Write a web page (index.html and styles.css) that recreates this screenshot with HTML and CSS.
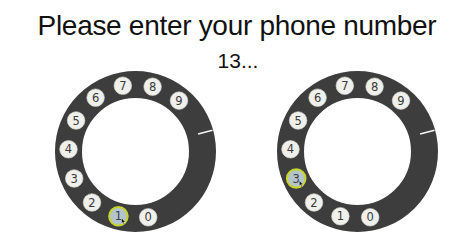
FILE: index.html
```html
<!DOCTYPE html>
<html>
<head>
<meta charset="utf-8">
<link rel="stylesheet" href="styles.css">
</head>
<body>
<h1 class="title">Please enter your phone number</h1>
<div class="number">13...</div>
<div class="dials">
  <svg class="dial" width="161" height="161" viewBox="0 0 161 161">
    <circle class="ring" cx="80.5" cy="80.5" r="67"/>
    <line class="stop" x1="143.1" y1="63.1" x2="157.5" y2="59.2"/>
    <g class="hole"><circle cx="124.0" cy="29.6" r="8.8"/><text x="124.0" y="33.7">9</text></g>
    <g class="hole"><circle cx="97.6" cy="15.7" r="8.8"/><text x="97.6" y="19.8">8</text></g>
    <g class="hole"><circle cx="67.8" cy="14.7" r="8.8"/><text x="67.8" y="18.8">7</text></g>
    <g class="hole"><circle cx="40.6" cy="26.7" r="8.8"/><text x="40.6" y="30.8">6</text></g>
    <g class="hole"><circle cx="21.1" cy="49.5" r="8.8"/><text x="21.1" y="53.6">5</text></g>
    <g class="hole"><circle cx="13.5" cy="78.3" r="8.8"/><text x="13.5" y="82.4">4</text></g>
    <g class="hole"><circle cx="19.2" cy="107.5" r="8.8"/><text x="19.2" y="111.6">3</text></g>
    <g class="hole"><circle cx="37.0" cy="131.5" r="8.8"/><text x="37.0" y="135.6">2</text></g>
    <g class="hole active"><circle cx="63.4" cy="145.3" r="9.3"/><text x="63.4" y="149.4">1</text></g>
    <g class="hole"><circle cx="93.2" cy="146.3" r="8.8"/><text x="93.2" y="150.4">0</text></g>
    <polygon class="cursor" points="66.5,147 66.5,152.5 67.8,151.3 68.8,153.4 69.6,153 68.6,151 70.3,151"/>
  </svg>
  <svg class="dial" width="161" height="161" viewBox="0 0 161 161">
    <circle class="ring" cx="80.5" cy="80.5" r="67"/>
    <line class="stop" x1="143.1" y1="63.1" x2="157.5" y2="59.2"/>
    <g class="hole"><circle cx="124.0" cy="29.6" r="8.8"/><text x="124.0" y="33.7">9</text></g>
    <g class="hole"><circle cx="97.6" cy="15.7" r="8.8"/><text x="97.6" y="19.8">8</text></g>
    <g class="hole"><circle cx="67.8" cy="14.7" r="8.8"/><text x="67.8" y="18.8">7</text></g>
    <g class="hole"><circle cx="40.6" cy="26.7" r="8.8"/><text x="40.6" y="30.8">6</text></g>
    <g class="hole"><circle cx="21.1" cy="49.5" r="8.8"/><text x="21.1" y="53.6">5</text></g>
    <g class="hole"><circle cx="13.5" cy="78.3" r="8.8"/><text x="13.5" y="82.4">4</text></g>
    <g class="hole active"><circle cx="19.2" cy="107.5" r="9.3"/><text x="19.2" y="111.6">3</text></g>
    <g class="hole"><circle cx="37.0" cy="131.5" r="8.8"/><text x="37.0" y="135.6">2</text></g>
    <g class="hole"><circle cx="63.4" cy="145.3" r="8.8"/><text x="63.4" y="149.4">1</text></g>
    <g class="hole"><circle cx="93.2" cy="146.3" r="8.8"/><text x="93.2" y="150.4">0</text></g>
    <polygon class="cursor" points="22.3,109.5 22.3,115 23.6,113.8 24.6,115.9 25.4,115.5 24.4,113.5 26.1,113.5"/>
  </svg>
</div>
</body>
</html>
```

FILE: styles.css
```css
html, body {
  margin: 0;
  padding: 0;
  background: #ffffff;
}
body {
  width: 474px;
  height: 248px;
  overflow: hidden;
  font-family: "Liberation Sans", Arial, sans-serif;
  color: #111111;
}
.title {
  margin: 0;
  padding-top: 9px;
  font-size: 28px;
  letter-spacing: -0.3px;
  line-height: 34px;
  font-weight: normal;
  text-align: center;
}
.number {
  margin-top: 8px;
  font-size: 21px;
  line-height: 20px;
  text-align: center;
  padding-left: 2px;
}
.dials {
  display: flex;
  padding-left: 55px;
  gap: 61px;
}
.dial {
  display: block;
  flex: none;
}
.ring {
  fill: none;
  stroke: #3d3d3d;
  stroke-width: 27;
}
.stop {
  stroke: #f4f4f4;
  stroke-width: 1.6;
}
.hole circle {
  fill: #efefeb;
  stroke: #d8d8d4;
  stroke-width: 0.6;
}
.hole text {
  font-family: "DejaVu Sans", sans-serif;
  font-size: 11.5px;
  fill: #3a3a3a;
  text-anchor: middle;
}
.hole.active circle {
  fill: #b5c4ca;
  stroke: #c6d42c;
  stroke-width: 2;
}
.hole.active text {
  fill: #34404a;
}
.cursor {
  fill: #111111;
  stroke: #ffffff;
  stroke-width: 0.4;
}
```
